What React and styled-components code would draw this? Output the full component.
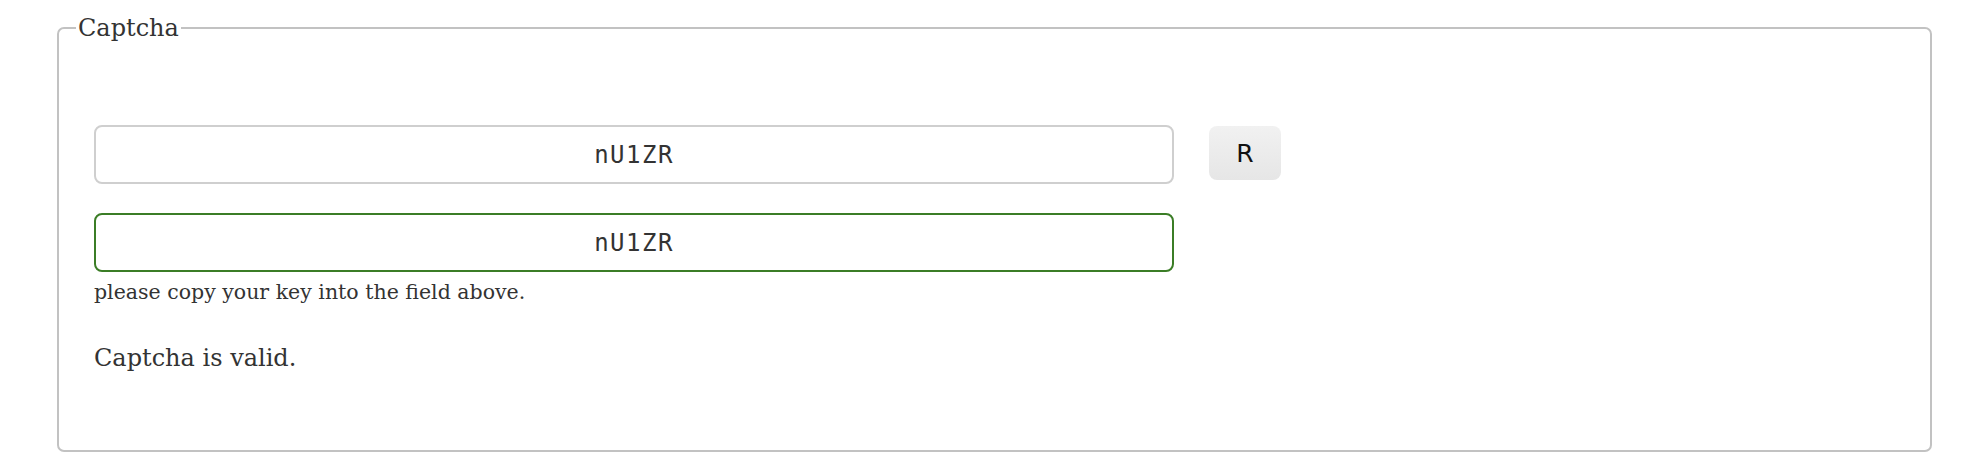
import React from 'react'
import styled, { createGlobalStyle } from 'styled-components'

const Global = createGlobalStyle`
  body {
    margin: 0;
    background: #fff;
    font-family: 'DejaVu Serif', 'Liberation Serif', serif;
    color: #333;
  }
`

const Fieldset = styled.fieldset`
  margin: 14px 46px 0 57px;
  padding: 0 17px 77px;
  border: 2px solid #c2c2c2;
  border-radius: 7px;
  min-width: 0;
`

const Legend = styled.legend`
  padding: 0 2px;
  font-size: 24px;
  line-height: 28px;
  color: #333;
`

const Body = styled.div`
  display: flex;
  flex-direction: column;
  padding: 83px 18px 0;
`

const Row = styled.div`
  display: flex;
  align-items: flex-start;
  gap: 35px;
  margin-top: ${(p) => p.$top || 0}px;
`

const KeyInput = styled.input`
  box-sizing: border-box;
  width: 1080px;
  height: 59px;
  margin: 0;
  padding: 0 12px;
  border: 2px solid ${(p) => (p.$valid ? '#3b7d26' : '#cfcfcf')};
  border-radius: 8px;
  background: #fff;
  font-family: 'DejaVu Sans Mono', 'Liberation Mono', monospace;
  font-size: 24px;
  letter-spacing: 1.5px;
  color: #333;
  text-align: center;
  outline: none;
`

const RefreshButton = styled.button`
  width: 72px;
  height: 54px;
  margin-top: 1px;
  padding: 0;
  border: none;
  border-radius: 8px;
  background: linear-gradient(#f1f1f1, #e6e6e6);
  font-family: 'DejaVu Sans', sans-serif;
  font-size: 25px;
  color: #111;
  cursor: pointer;
`

const Hint = styled.p`
  margin: 5px 0 0;
  font-size: 20.5px;
  line-height: 30px;
  color: #333;
`

const Status = styled.p`
  margin: 36px 0 0;
  font-size: 24px;
  line-height: 30px;
  color: #333;
`

export default function App() {
  const key = 'nU1ZR'
  return (
    <>
      <Global />
      <Fieldset>
        <Legend>Captcha</Legend>
        <Body>
          <Row>
            <KeyInput readOnly value={key} />
            <RefreshButton type='button'>R</RefreshButton>
          </Row>
          <Row $top={29}>
            <KeyInput $valid readOnly value={key} />
          </Row>
          <Hint>please copy your key into the field above.</Hint>
          <Status>Captcha is valid.</Status>
        </Body>
      </Fieldset>
    </>
  )
}
